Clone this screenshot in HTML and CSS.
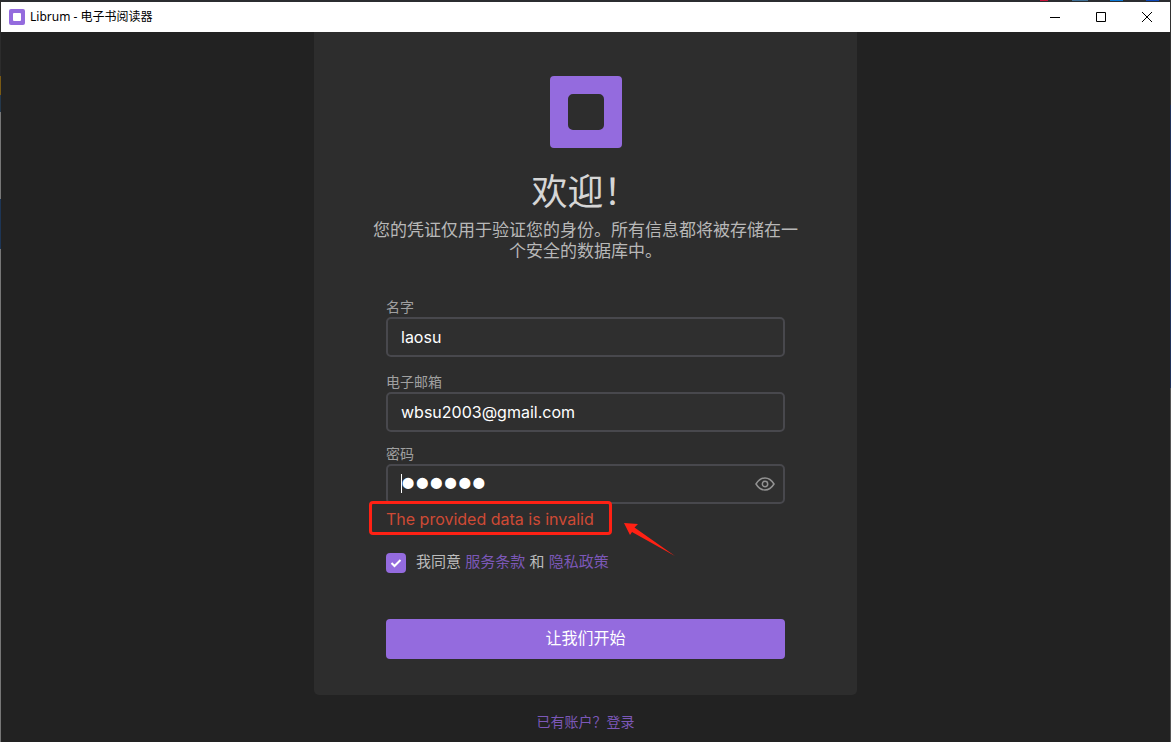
FILE: index.html
```html
<!DOCTYPE html>
<html lang="zh-CN">
<head>
<meta charset="utf-8">
<meta name="viewport" content="width=device-width, initial-scale=1">
<title>Librum - 电子书阅读器</title>
<link rel="stylesheet" href="styles.css">
</head>
<body>
<div class="window">
  <header class="titlebar">
    <svg class="titlebar-logo" viewBox="0 0 16 16" aria-hidden="true"><rect width="16" height="16" rx="2" fill="#946bde"/><rect x="4" y="4" width="8" height="8" rx="1" fill="#fff"/></svg>
    <span class="titlebar-title">Librum - 电子书阅读器</span>
    <div class="window-controls">
      <button type="button" class="window-button" aria-label="最小化"><svg viewBox="0 0 12 12"><path d="M1 6.500H11"/></svg></button>
      <button type="button" class="window-button" aria-label="最大化"><svg viewBox="0 0 12 12"><path d="M1.500 1.500H10.500V10.500H1.500Z"/></svg></button>
      <button type="button" class="window-button" aria-label="关闭"><svg viewBox="0 0 12 12"><path d="M1 1L11 11M11 1L1 11"/></svg></button>
    </div>
  </header>
  <main class="page">
    <section class="card">
      <svg class="logo" viewBox="0 0 72 72" aria-hidden="true"><path fill="#946bde" fill-rule="evenodd" d="M4 0H68A4 4 0 0 1 72 4V68A4 4 0 0 1 68 72H4A4 4 0 0 1 0 68V4A4 4 0 0 1 4 0ZM23 18A5 5 0 0 0 18 23V49A5 5 0 0 0 23 54H49A5 5 0 0 0 54 49V23A5 5 0 0 0 49 18Z"/></svg>
      <h1 class="title">欢迎！</h1>
      <p class="intro">您的凭证仅用于验证您的身份。所有信息都将被存储在一个安全的数据库中。</p>
      <form class="form">
        <div class="field">
          <label class="label" for="name">名字</label>
          <input class="input" id="name" type="text" value="laosu">
        </div>
        <div class="field">
          <label class="label" for="email">电子邮箱</label>
          <input class="input" id="email" type="email" value="wbsu2003@gmail.com">
        </div>
        <div class="field field-password">
          <label class="label" for="password">密码</label>
          <div class="password">
            <input class="input input-password" id="password" type="password" value="secret">
            <span class="caret"></span>
            <button type="button" class="reveal" aria-label="显示密码"><svg viewBox="0 0 20 14"><path d="M1 7C3.500 3 6.500 1 10 1S16.500 3 19 7C16.500 11 13.500 13 10 13S3.500 11 1 7Z"/><circle cx="10" cy="7" r="2.700"/></svg></button>
          </div>
        </div>
        <div class="error">
          <p class="error-text">The provided data is invalid</p>
          <span class="error-frame"></span>
          <svg class="error-arrow" viewBox="0 0 52 34" aria-hidden="true"><path fill="#ff2114" d="M0 0L14 1L10.500 4.500L51 33L8 9L6 12Z"/></svg>
        </div>
        <div class="consent">
          <span class="check"><input class="checkbox" id="agree" type="checkbox" checked><svg class="tick" viewBox="0 0 20 20" aria-hidden="true"><path d="M5.500 10L8.500 13L14.500 7"/></svg></span>
          <label class="consent-text" for="agree">我同意 <a class="link" href="#terms">服务条款</a> 和 <a class="link" href="#privacy">隐私政策</a></label>
        </div>
        <button type="submit" class="submit">让我们开始</button>
      </form>
    </section>
    <a class="login" href="#login">已有账户？登录</a>
  </main>
</div>
</body>
</html>
```
FILE: styles.css
```css
* { box-sizing: border-box; }
body {
  margin: 0;
  background: #222;
  color: #d6d6d6;
  font-family: Inter, "Noto Sans CJK SC", sans-serif;
}
.window {
  min-height: 100vh;
  padding: 2px 1px 0;
  background:
    linear-gradient(to left, transparent 12px, #0d47b8 12px 25px, transparent 25px 48px, #0a78d4 48px 61px, transparent 61px 83px, #3f6f96 83px 99px, transparent 99px 123px, #c8143a 123px 131px, transparent 131px) top / 100% 1px no-repeat,
    linear-gradient(to bottom, #2c2c2c 76px, #7a5a14 76px 95px, #24384c 95px 112px, #777 112px 199px, #1d3555 199px 249px, #777 249px) left / 1px 100% no-repeat,
    linear-gradient(to bottom, #333 105px, #1f3058 105px 388px, #555 388px) right / 1px 100% no-repeat, #2b2d30;
  display: flex;
  flex-direction: column;
}
.titlebar {
  display: flex;
  align-items: center;
  height: 30px;
  padding-left: 8px;
  gap: 5px;
  background: #fff;
  color: #000;
}
.titlebar-logo { width: 16px; height: 16px; }
.titlebar-title { font: 12px/16px "Noto Sans", "Noto Sans CJK SC", sans-serif; }
.window-controls { display: flex; margin-left: auto; }
.window-button {
  display: grid;
  place-items: center;
  width: 46px;
  height: 30px;
  padding: 0;
  border: 0;
  background: none;
}
.window-button svg { width: 12px; height: 12px; fill: none; stroke: #000; }
.page {
  flex: 1;
  display: flex;
  flex-direction: column;
  align-items: center;
  gap: 17px;
  padding: 0 16px 10px;
  background: #222;
}
.card {
  width: 100%;
  max-width: 543px;
  display: flex;
  flex-direction: column;
  align-items: center;
  padding: 44px 36px 36px;
  border-radius: 0 0 5px 5px;
  background: #2d2d2d;
}
.logo { width: 72px; height: 72px; }
.title { margin: 22px 0 6px; font-size: 36px; line-height: 44px; font-weight: 400; }
.intro {
  max-width: 432px;
  margin: 0;
  color: #b8b8b8;
  font-size: 17px;
  line-height: 21px;
  text-align: center;
}
.form { width: 100%; padding: 0 36px; margin-top: 35px; display: flex; flex-direction: column; }
.field { display: flex; flex-direction: column; margin-bottom: 15px; }
.field-password { margin: -3px 0 0; }
.label { font-size: 14px; line-height: 20px; color: #a0a0a0; }
.input {
  width: 100%;
  height: 40px;
  padding: 0 13px;
  border: 2px solid #48484d;
  border-radius: 5px;
  outline: none;
  background: #2f2f2f;
  color: #fff;
  font: 16px/20px Inter, sans-serif;
}
.password { position: relative; }
.input-password {
  display: block;
  padding: 1px 44px 0 13px;
  font: 24px/28px "DejaVu Sans", sans-serif;
  -webkit-text-stroke: 4px #fff;
}
.caret { position: absolute; left: 15px; top: 10px; width: 1px; height: 19px; background: #fff; }
.reveal { position: absolute; right: 10px; top: 13px; padding: 0; border: 0; background: none; line-height: 0; }
.reveal svg { width: 20px; height: 14px; fill: none; stroke: #929292; stroke-width: 1.5; }
.error { position: relative; margin-top: 5px; }
.error-text { margin: 0; color: #cf4a35; font-size: 16px; line-height: 20px; }
.error-frame { position: absolute; left: -17px; top: -8px; width: 243px; height: 34px; border: 3px solid #ff2114; border-radius: 4px; }
.error-arrow { position: absolute; left: 238px; top: 14px; width: 52px; height: 34px; }
.consent { display: flex; align-items: center; gap: 10px; margin: 24px 0 46px; }
.consent-text { padding-bottom: 2px; font-size: 15px; line-height: 18px; color: #bcbcbc; }
.check { display: grid; width: 20px; height: 20px; }
.checkbox { grid-area: 1 / 1; appearance: none; width: 20px; height: 20px; margin: 0; border-radius: 4px; background: #946bde; }
.tick { grid-area: 1 / 1; width: 20px; height: 20px; fill: none; stroke: #fff; stroke-width: 2; pointer-events: none; }
.link, .login { color: #7c58b8; text-decoration: none; }
.submit {
  height: 40px;
  padding: 0 6px 2px;
  border: 0;
  border-radius: 4px;
  background: #946bde;
  color: #fff;
  font: 16px/20px Inter, "Noto Sans CJK SC", sans-serif;
}
.login { font-size: 14px; line-height: 20px; }
```
